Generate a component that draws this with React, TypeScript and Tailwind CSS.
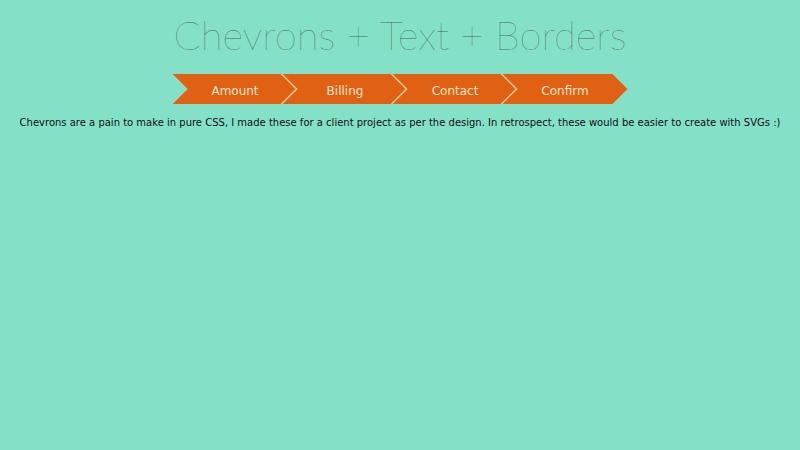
const steps = ["Amount", "Billing", "Contact", "Confirm"];

// Each step is a 125x30 chevron; the next one tucks its notch into the previous tip.
function Step({ label, last }: { label: string; last: boolean }) {
  return (
    <div
      className={`relative -ml-[15px] first:ml-0 h-[30px] w-[125px] ${
        last ? "bg-[#e06114]" : "bg-[#e9c48f]"
      } [clip-path:polygon(0_0,110px_0,125px_15px,110px_30px,0_30px,15px_15px)]`}
    >
      <div
        className={`flex h-full w-full items-center justify-center bg-[#e06114] pt-[3px] ${
          last ? "" : "[clip-path:polygon(0_0,108px_0,123px_15px,108px_30px,0_30px,15px_15px)]"
        }`}
      >
        <span className="text-[12px] text-[#fbe6cc] [font-family:'DejaVu_Sans',sans-serif]">
          {label}
        </span>
      </div>
    </div>
  );
}

export default function App() {
  return (
    <div className="min-h-[450px] w-full bg-[#85e0c8] [font-family:'DejaVu_Sans',sans-serif]">
      <h1 className="pt-[9px] text-center text-[40px] leading-[52px] font-thin text-[#46695c] [font-family:Lato,sans-serif]">
        Chevrons + Text + Borders
      </h1>
      <div className="mt-[13px] flex justify-center">
        {steps.map((s, i) => (
          <Step key={s} label={s} last={i === steps.length - 1} />
        ))}
      </div>
      <p className="mt-[11px] whitespace-nowrap text-center text-[10px] leading-[16px] text-[#111]">
        Chevrons are a pain to make in pure CSS, I made these for a client project as per the design. In
        retrospect, these would be easier to create with SVGs :)
      </p>
    </div>
  );
}
